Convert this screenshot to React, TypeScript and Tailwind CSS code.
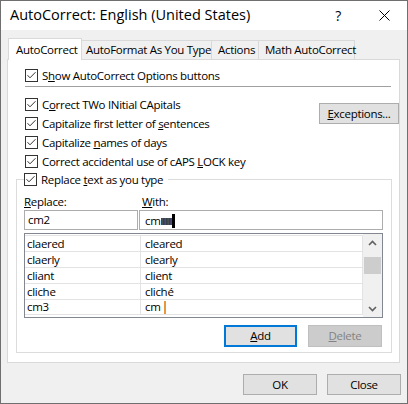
import type { ReactNode } from 'react';

const Check = () => (
  <span className="flex h-[13px] w-[13px] shrink-0 items-center justify-center border border-[#333333] bg-white">
    <svg width="11" height="11" viewBox="0 0 11 11">
      <path d="M1.5 5.2 L4 7.8 L9.5 2.2" fill="none" stroke="#333333" strokeWidth="1" />
    </svg>
  </span>
);

const CheckRow = ({ children }: { children: ReactNode }) => (
  <div className="flex h-[19px] items-center">
    <Check />
    <span className="ml-[4px] whitespace-nowrap">{children}</span>
  </div>
);

const rows = [
  ['claered', 'cleared'],
  ['claerly', 'clearly'],
  ['cliant', 'client'],
  ['cliche', 'cliché'],
  ['cm3', 'cm'],
];

const Chevron = ({ down }: { down?: boolean }) => (
  <svg width="9" height="6" viewBox="0 0 9 6">
    <path
      d={down ? 'M1 1 L4.5 4.5 L8 1' : 'M1 5 L4.5 1.5 L8 5'}
      fill="none"
      stroke="#606060"
      strokeWidth="1.6"
    />
  </svg>
);

export default function App() {
  return (
    <div className="flex h-[404px] w-[408px] flex-col overflow-hidden border border-[#6f6f6f] bg-[#f0f0f0] font-['Open_Sans',sans-serif] text-[11.5px] leading-none tracking-[-0.3px] text-black">
      {/* title bar */}
      <div className="flex h-[29px] shrink-0 items-center bg-white">
        <span className="ml-[9px] text-[14.5px] tracking-[0px]">AutoCorrect: English (United States)</span>
        <span className="ml-auto mr-[38px] text-[14px]">?</span>
        <svg width="11" height="11" viewBox="0 0 11 11" className="mr-[17px]">
          <path d="M0.5 0.5 L10.5 10.5 M10.5 0.5 L0.5 10.5" stroke="#000" strokeWidth="1" />
        </svg>
      </div>

      {/* tabs */}
      <div className="mt-[8px] ml-[7px] flex h-[21px] items-end whitespace-nowrap">
        <div className="relative z-10 -mb-[1px] flex h-[22px] w-[74px] items-center border border-b-0 border-[#d9d9d9] bg-white pl-[7px]">
          AutoCorrect
        </div>
        <div className="flex h-[19px] w-[130px] items-center border border-b-0 border-l-0 border-[#d9d9d9] pl-[4px]">
          AutoFormat As You Type
        </div>
        <div className="flex h-[19px] w-[47px] items-center border border-b-0 border-l-0 border-[#d9d9d9] pl-[6px]">
          Actions
        </div>
        <div className="flex h-[19px] w-[96px] items-center border border-b-0 border-l-0 border-[#d9d9d9] pl-[6px]">
          Math AutoCorrect
        </div>
      </div>

      {/* panel */}
      <div className="ml-[6px] flex h-[304px] w-[393px] flex-col border border-[#d9d9d9] bg-white pt-[6px]">
        <div className="ml-[17px]">
          <CheckRow>
            S<u>h</u>ow AutoCorrect Options buttons
          </CheckRow>
        </div>
        <div className="ml-[17px] mt-[1px] h-[1px] w-[366px] bg-[#a0a0a0]" />

        <div className="ml-[17px] mt-[8px] flex">
          <div className="flex flex-col">
            <CheckRow>
              C<u>o</u>rrect TWo INitial CApitals
            </CheckRow>
            <CheckRow>
              Capitalize first letter of <u>s</u>entences
            </CheckRow>
            <CheckRow>
              Capitalize <u>n</u>ames of days
            </CheckRow>
            <CheckRow>
              Correct accidental use of cAPS <u>L</u>OCK key
            </CheckRow>
          </div>
          <button className="ml-auto mt-[8px] flex h-[21px] w-[80px] items-center justify-center border border-[#adadad] bg-[#e1e1e1]">
            <u>E</u>xceptions...
          </button>
        </div>

        {/* group box */}
        <div className="ml-[8px] mt-[8px] flex w-[376px] flex-col border border-[#dcdcdc] pb-[5px]">
          <div className="-mt-[10px] ml-[7px] w-fit bg-white pr-[5px]">
            <CheckRow>
              Replace <u>t</u>ext as you type
            </CheckRow>
          </div>

          <div className="ml-[7px] mt-[5px] flex h-[15px] items-center">
            <span className="w-[118px]">
              <u>R</u>eplace:
            </span>
            <span>
              <u>W</u>ith:
            </span>
          </div>

          <div className="ml-[7px] mt-[1px] flex gap-[1px]">
            <div className="flex h-[20px] w-[114px] items-center border border-[#adadad] bg-white pl-[3px]">
              cm2
            </div>
            <div className="flex h-[20px] w-[244px] items-center border border-[#adadad] bg-white pl-[5px]">
              <span className="mt-[2px]">cm</span>
              <span className="mt-[2px] h-[7px] w-[11px] bg-[repeating-linear-gradient(90deg,#2b3a6b_0px,#5a4a6a_1px,#3c5a3c_2px,#2a2a4a_3px)]" />
              <span className="mt-[1px] h-[14px] w-[3px] bg-black" />
            </div>
          </div>

          <div className="ml-[7px] mt-[3px] flex h-[85px] w-[359px] border border-[#828790] bg-white">
            <div className="flex w-[338px] flex-col pt-[1px]">
              {rows.map(([a, b], i) => (
                <div key={a} className="flex h-[16px] border-t border-[#e3e3e3] last:border-b">
                  <div className="flex w-[116px] items-center border-r border-[#e3e3e3] pl-[2px]">{a}</div>
                  <div className="flex flex-1 items-center border-r border-[#e3e3e3] pl-[4px]">
                    {b}
                    {i === 4 && <span className="ml-[3px] h-[13px] w-[2px] bg-[#e8983a]" />}
                  </div>
                </div>
              ))}
            </div>
            <div className="flex w-[19px] flex-col bg-[#f0f0f0]">
              <div className="flex h-[17px] items-center justify-center">
                <Chevron />
              </div>
              <div className="flex-1">
                <div className="mx-[1px] mt-[6px] h-[17px] bg-[#cdcdcd]" />
              </div>
              <div className="flex h-[17px] items-center justify-center">
                <Chevron down />
              </div>
            </div>
          </div>

          <div className="ml-[7px] mt-[7px] flex w-[358px] justify-end gap-[11px]">
            <button className="flex h-[22px] w-[73px] items-center justify-center border-2 border-[#0078d7] bg-[#e1e1e1]">
              <u>A</u>dd
            </button>
            <button className="flex h-[22px] w-[74px] items-center justify-center border border-[#bfbfbf] bg-[#cccccc] text-[#838383]">
              <u>D</u>elete
            </button>
          </div>
        </div>
      </div>

      {/* bottom buttons */}
      <div className="mr-[6px] mt-[11px] flex justify-end gap-[10px]">
        <button className="flex h-[21px] w-[74px] items-center justify-center border border-[#adadad] bg-[#e1e1e1]">
          OK
        </button>
        <button className="flex h-[21px] w-[74px] items-center justify-center border border-[#adadad] bg-[#e1e1e1]">
          Close
        </button>
      </div>
    </div>
  );
}
